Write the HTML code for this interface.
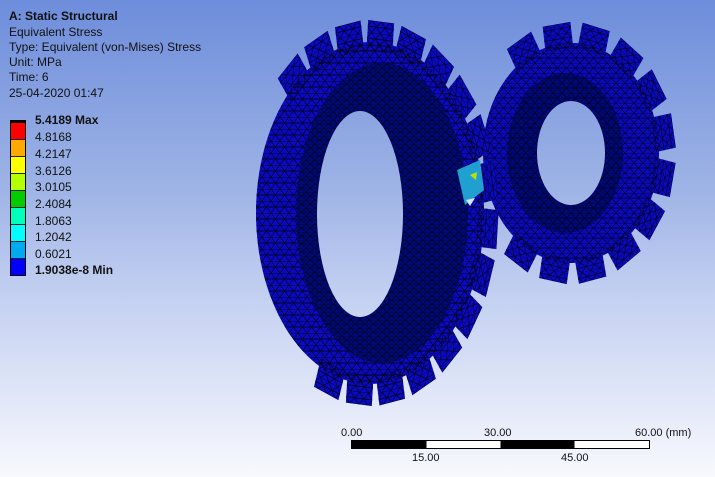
<!DOCTYPE html>
<html><head><meta charset="utf-8"><style>
html,body{margin:0;padding:0}
body{width:715px;height:477px;overflow:hidden;position:relative;font-family:"Liberation Sans",sans-serif;background:linear-gradient(#6d8ddb 0%,#9fb4e6 40%,#c3d0f1 62%,#f8f9fe 100%)}
.t{position:absolute;left:9px;font-size:12px;color:#111;line-height:15px;white-space:nowrap}
.lg{position:absolute;left:35px;font-size:12px;color:#111;white-space:nowrap;line-height:14px}
.b{font-weight:bold}
.sc{position:absolute;font-size:11px;color:#111;white-space:nowrap}
</style></head><body>
<div class="t b" style="top:9px">A: Static Structural</div>
<div class="t" style="top:25px">Equivalent Stress</div>
<div class="t" style="top:40px">Type: Equivalent (von-Mises) Stress</div>
<div class="t" style="top:55px">Unit: MPa</div>
<div class="t" style="top:70px">Time: 6</div>
<div class="t" style="top:86px">25-04-2020 01:47</div>

<div style="position:absolute;left:10px;top:120px;width:16px;height:156px;background:#000"></div>
<div style="position:absolute;left:11px;top:123px;width:14px;height:152px;display:flex;flex-direction:column">
<div style="flex:1;background:#f00;border-bottom:1px solid #222"></div>
<div style="flex:1;background:#fa0;border-bottom:1px solid #222"></div>
<div style="flex:1;background:#ff0;border-bottom:1px solid #222"></div>
<div style="flex:1;background:#b4ff00;border-bottom:1px solid #222"></div>
<div style="flex:1;background:#0c0;border-bottom:1px solid #222"></div>
<div style="flex:1;background:#0fb;border-bottom:1px solid #222"></div>
<div style="flex:1;background:#0ff;border-bottom:1px solid #222"></div>
<div style="flex:1;background:#0ae;border-bottom:1px solid #222"></div>
<div style="flex:1;background:#0000ff"></div>
</div>
<div class="lg b" style="top:113px">5.4189 Max</div>
<div class="lg" style="top:130px">4.8168</div>
<div class="lg" style="top:147px">4.2147</div>
<div class="lg" style="top:164px">3.6126</div>
<div class="lg" style="top:180px">3.0105</div>
<div class="lg" style="top:197px">2.4084</div>
<div class="lg" style="top:214px">1.8063</div>
<div class="lg" style="top:230px">1.2042</div>
<div class="lg" style="top:247px">0.6021</div>
<div class="lg b" style="top:263px">1.9038e-8 Min</div>

<svg width="715" height="477" style="position:absolute;left:0;top:0">
<defs>
<linearGradient id="bg" gradientUnits="userSpaceOnUse" x1="0" y1="0" x2="0" y2="477">
<stop offset="0" stop-color="#6d8ddb"/><stop offset="0.4" stop-color="#9fb4e6"/><stop offset="0.62" stop-color="#c3d0f1"/><stop offset="1" stop-color="#f8f9fe"/></linearGradient>
<pattern id="mesh" width="9" height="8" patternUnits="userSpaceOnUse">
<path d="M0 0H9M0 4H9M0 0L4.5 4L9 0M0 8L4.5 4L9 8" stroke="#000" stroke-width="0.6" fill="none" opacity="0.8"/>
</pattern>
<g id="big">
<circle r="114"/>
<rect x="-13" y="-128" width="26" height="20" transform="rotate(-40)"/>
<rect x="-13" y="-128" width="26" height="20" transform="rotate(-25)"/>
<rect x="-13" y="-128" width="26" height="20" transform="rotate(-10)"/>
<rect x="-13" y="-128" width="26" height="20" transform="rotate(5)"/>
<rect x="-13" y="-128" width="26" height="20" transform="rotate(20)"/>
<rect x="-13" y="-128" width="26" height="20" transform="rotate(35)"/>
<rect x="-13" y="-128" width="26" height="20" transform="rotate(50)"/>
<rect x="-13" y="-128" width="26" height="20" transform="rotate(65)"/>
<rect x="-13" y="-128" width="26" height="20" transform="rotate(80)"/>
<rect x="-13" y="-128" width="26" height="20" transform="rotate(95)"/>
<rect x="-13" y="-128" width="26" height="20" transform="rotate(110)"/>
<rect x="-13" y="-128" width="26" height="20" transform="rotate(125)"/>
<rect x="-13" y="-128" width="26" height="20" transform="rotate(140)"/>
<rect x="-13" y="-128" width="26" height="20" transform="rotate(155)"/>
<rect x="-13" y="-128" width="26" height="20" transform="rotate(170)"/>
<rect x="-13" y="-128" width="26" height="20" transform="rotate(185)"/>
<rect x="-13" y="-128" width="26" height="20" transform="rotate(200)"/>
</g>
<g id="small">
<circle r="88"/>
<rect x="-14" y="-104" width="28" height="20" transform="rotate(-30)"/>
<rect x="-14" y="-104" width="28" height="20" transform="rotate(-8)"/>
<rect x="-14" y="-104" width="28" height="20" transform="rotate(14)"/>
<rect x="-14" y="-104" width="28" height="20" transform="rotate(36)"/>
<rect x="-14" y="-104" width="28" height="20" transform="rotate(58)"/>
<rect x="-14" y="-104" width="28" height="20" transform="rotate(80)"/>
<rect x="-14" y="-104" width="28" height="20" transform="rotate(102)"/>
<rect x="-14" y="-104" width="28" height="20" transform="rotate(124)"/>
<rect x="-14" y="-104" width="28" height="20" transform="rotate(146)"/>
<rect x="-14" y="-104" width="28" height="20" transform="rotate(168)"/>
<rect x="-14" y="-104" width="28" height="20" transform="rotate(190)"/>
<rect x="-14" y="-104" width="28" height="20" transform="rotate(212)"/>
</g>
</defs>
<!-- small gear (behind) -->
<g transform="translate(571,153) scale(1,1.25)">
<use href="#small" fill="#0a0ac0"/>
<use href="#small" fill="url(#mesh)"/>
<ellipse cx="-6" cy="0" rx="58" ry="64" fill="#00087a"/>
<ellipse cx="-6" cy="0" rx="58" ry="64" fill="url(#mesh)"/>
</g>
<ellipse cx="571" cy="153" rx="34" ry="52" fill="url(#bg)"/>
<!-- big gear -->
<g transform="translate(370,213) scale(1,1.5)">
<use href="#big" fill="#0a0ac4"/>
<use href="#big" fill="url(#mesh)"/>
</g>
<ellipse cx="382" cy="213" rx="86" ry="150" fill="#000a78"/>
<ellipse cx="382" cy="213" rx="86" ry="150" fill="url(#mesh)"/>
<ellipse cx="360" cy="214" rx="43" ry="103" fill="url(#bg)"/>
<path d="M457 170 L480 160 L484 190 L465 205 Z" fill="#20a0d0"/>
<path d="M470 175 L477 172 L476 180 Z" fill="#c0e000"/>
<path d="M466 200 L475 198 L470 206 Z" fill="#dde4f6"/>
</svg>

<div class="sc" style="left:341px;top:427px">0.00</div>
<div class="sc" style="left:484px;top:427px">30.00</div>
<div class="sc" style="left:635px;top:427px">60.00 (mm)</div>
<div style="position:absolute;left:351px;top:440px;width:297px;height:7px;border:1px solid #000;background:linear-gradient(90deg,#000 0 25%,#fff 25% 50%,#000 50% 75%,#fff 75%)"></div>
<div class="sc" style="left:412px;top:452px">15.00</div>
<div class="sc" style="left:561px;top:452px">45.00</div>
</body></html>
